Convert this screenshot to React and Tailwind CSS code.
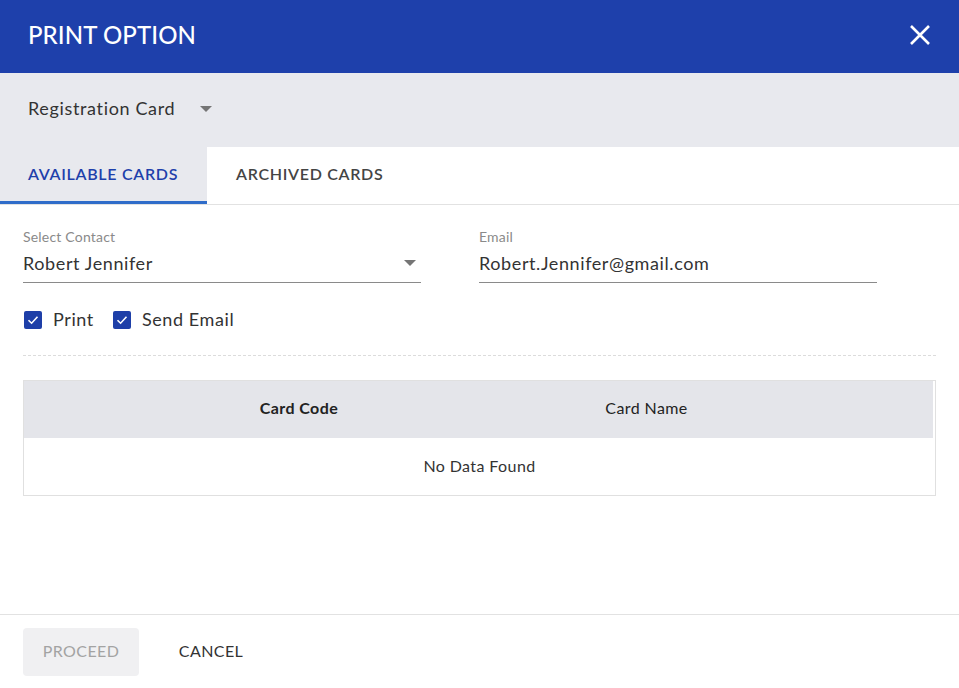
import React, { useState } from "react";

const Caret = () => (
  <svg width="12" height="6" viewBox="0 0 12 6" className="shrink-0">
    <path d="M0 0 L12 0 L6 6 Z" fill="#757575" />
  </svg>
);

const Checkbox = ({ label, checked, onChange }) => (
  <label className="flex items-center gap-[11px] cursor-pointer select-none">
    <span className="w-[18px] h-[18px] rounded-[2px] bg-[#1e3fa8] flex items-center justify-center">
      {checked && (
        <svg width="12" height="10" viewBox="0 0 12 10">
          <path d="M1.5 5.2 L4.6 8.2 L10.5 1.8" fill="none" stroke="#fff" strokeWidth="1.6" />
        </svg>
      )}
    </span>
    <span className="text-[18px] text-[#333] tracking-[0.6px]" onClick={onChange}>
      {label}
    </span>
  </label>
);

const Field = ({ label, value, caret }) => (
  <div className="w-[398px]">
    <div className="text-[14px] leading-[16px] text-[#8a8a8a] tracking-[0.2px]">{label}</div>
    <div className="flex items-center justify-between h-[38px] border-b border-[#8a8a8a] pr-[5px] pb-[2px]">
      <span className="text-[18px] text-[#333] leading-[24px] tracking-[0.6px]">{value}</span>
      {caret && <Caret />}
    </div>
  </div>
);

export default function App() {
  const [tab, setTab] = useState("available");
  const [print, setPrint] = useState(true);
  const [email, setEmail] = useState(true);

  return (
    <div className="w-[959px] h-[688px] bg-white flex flex-col font-['Lato',sans-serif]">
      {/* title bar */}
      <div className="h-[73px] bg-[#1e40ab] flex items-center justify-between pl-[28px] pr-[28px] pb-[3px] shrink-0">
        <h1 className="text-[24px] text-white font-medium tracking-[0.1px]">PRINT OPTION</h1>
        <svg width="22" height="22" viewBox="0 0 22 22">
          <path d="M2 2 L20 20 M20 2 L2 20" stroke="#fff" strokeWidth="2.6" />
        </svg>
      </div>

      {/* card type picker */}
      <div className="h-[74px] bg-[#e8e9ee] flex items-center gap-[25px] pl-[28px] pb-[3px] shrink-0">
        <span className="text-[18px] text-[#333] tracking-[0.65px]">Registration Card</span>
        <Caret />
      </div>

      {/* tabs */}
      <div className="h-[58px] flex border-b border-[#e2e2e2] shrink-0">
        <button
          onClick={() => setTab("available")}
          className={`w-[207px] h-full pl-[28px] text-left text-[16px] font-semibold tracking-[0.7px] border-b-[3px] ${
            tab === "available"
              ? "bg-[#e8e9ee] text-[#1e40ab] border-[#2f6cc9]"
              : "bg-white text-[#444] border-transparent"
          }`}
        >
          AVAILABLE CARDS
        </button>
        <button
          onClick={() => setTab("archived")}
          className={`w-[206px] h-full pl-[29px] text-left text-[16px] font-semibold tracking-[0.7px] border-b-[3px] ${
            tab === "archived"
              ? "bg-[#e8e9ee] text-[#1e40ab] border-[#2f6cc9]"
              : "bg-white text-[#444] border-transparent"
          }`}
        >
          ARCHIVED CARDS
        </button>
      </div>

      {/* form */}
      <div className="flex-1 px-[23px] pt-[24px]">
        <div className="flex gap-[58px]">
          <Field label="Select Contact" value="Robert Jennifer" caret />
          <Field label="Email" value="Robert.Jennifer@gmail.com" />
        </div>

        <div className="flex items-center gap-[19px] mt-[23px] pl-[1px]">
          <Checkbox label="Print" checked={print} onChange={() => setPrint(!print)} />
          <Checkbox label="Send Email" checked={email} onChange={() => setEmail(!email)} />
        </div>

        <div className="mt-[22px] border-t border-dashed border-[#dcdcdc]" />

        <div className="mt-[24px] border border-[#e0e0e0]">
          <div className="h-[57px] mr-[2px] pb-[3px] bg-[#e4e5ea] grid grid-cols-[214px_122px_1fr] items-center text-[16px] text-[#222] tracking-[0.4px]">
            <div />
            <div className="text-center font-bold">Card Code</div>
            <div className="text-center">Card Name</div>
          </div>
          <div className="h-[57px] pb-[2px] flex items-center justify-center text-[16px] text-[#333] tracking-[0.4px]">
            No Data Found
          </div>
        </div>
      </div>

      {/* footer */}
      <div className="h-[74px] border-t border-[#e2e2e2] flex items-center gap-[20px] px-[23px] shrink-0">
        <button
          disabled
          className="w-[116px] h-[48px] rounded-[4px] bg-[#f0f0f2] pb-[2px] text-[16px] text-[#a3a3a3] tracking-[0.4px]"
        >
          PROCEED
        </button>
        <button className="w-[104px] h-[48px] pb-[2px] text-[16px] text-[#333] tracking-[0.4px]">CANCEL</button>
      </div>
    </div>
  );
}
